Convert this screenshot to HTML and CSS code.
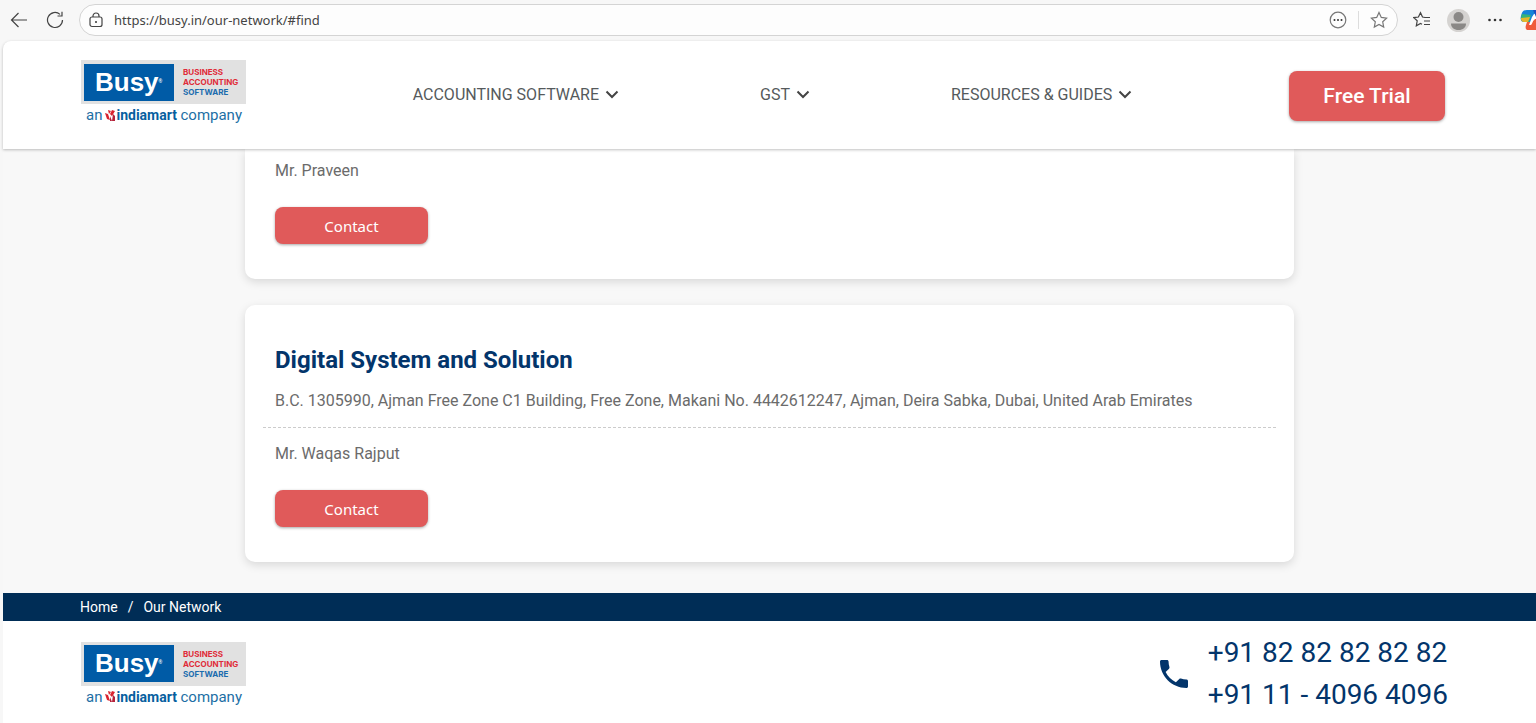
FILE: index.html
```html
<!DOCTYPE html>
<html lang="en">
<head>
    <meta charset="UTF-8">
    <meta name="viewport" content="width=device-width, initial-scale=1.0">
    <title>Our Network</title>
    <link rel="stylesheet" href="styles.css">
</head>
<body>
    <div class="toolbar">
        <button class="iconBtn" aria-label="Back">
            <svg width="18" height="18" viewBox="0 0 18 18"><path d="M17 9H1.5M8.5 2 1.5 9l7 7"/></svg>
        </button>
        <button class="iconBtn" aria-label="Refresh">
            <svg width="18" height="18" viewBox="0 0 18 18"><path d="M16.5 9A7.5 7.5 0 1 1 14 3.4M16 .8V5h-4.500"/></svg>
        </button>
        <div class="address">
            <svg width="14" height="16" viewBox="0 0 14 16"><rect x="1" y="5" width="12" height="9.500" rx="2"/><path d="M4 5V4a3 3 0 0 1 6 0v1"/><circle class="dot" cx="7" cy="10" r="1"/></svg>
            <input type="text" class="url" aria-label="Address" value="https://busy.in/our-network/#find">
            <button class="iconBtn soft" aria-label="Page options">
                <svg width="18" height="18" viewBox="0 0 18 18"><circle cx="9" cy="9" r="7.800"/><circle class="dot" cx="5.500" cy="9" r="1"/><circle class="dot" cx="9" cy="9" r="1"/><circle class="dot" cx="12.500" cy="9" r="1"/></svg>
            </button>
            <span class="divider"></span>
            <button class="iconBtn soft" aria-label="Add to favorites">
                <svg width="18" height="18" viewBox="0 0 18 18"><path d="M9 1.500l2.300 4.900 5.300.7-3.900 3.700 1 5.300L9 13.500l-4.700 2.600 1-5.300L1.400 7.100l5.300-.7z"/></svg>
            </button>
        </div>
        <div class="tools">
            <button class="iconBtn" aria-label="Favorites">
                <svg width="18" height="18" viewBox="0 0 18 18"><path d="M17 6.500h-5L9.500 6 7.500 1.700 5.400 6l-4.600.6 3.400 3.200-.9 5 4.200-2.300 1.500.8M11 10h6M11 13.500h6"/></svg>
            </button>
            <button class="iconBtn" aria-label="Profile">
                <svg class="avatar" width="23" height="23" viewBox="0 0 23 23"><circle cx="11.500" cy="11.500" r="11.500" fill="#d5d3d1"/><circle cx="11.500" cy="8" r="5" fill="#8a8886"/><path d="M4 14.500h15c0 4-3 6.500-7.500 6.500S4 18.500 4 14.500z" fill="#8a8886"/></svg>
            </button>
            <button class="iconBtn" aria-label="Settings">
                <svg width="18" height="18" viewBox="0 0 18 18"><circle class="dot" cx="3.500" cy="9" r="1.300"/><circle class="dot" cx="9" cy="9" r="1.300"/><circle class="dot" cx="14.500" cy="9" r="1.300"/></svg>
            </button>
            <button class="iconBtn" aria-label="Copilot">
                <svg class="copilot" width="24" height="22" viewBox="0 0 24 22">
                    <path d="M7 1h9l-4 12H5c-4 0-5-2-4-6 1-4 2-6 6-6z" fill="#1683d8"/>
                    <path d="M2 5l9 1-2 7H5c-4 0-5-3-3-8z" fill="#35b37a"/>
                    <path d="M1 9l9-1-2 5H5c-3 0-4-1-4-4z" fill="#e5b62c"/>
                    <path d="M17 8h3c4 0 4 3 3 7-1 4-2 6-6 6H8c-2 0-3-2-2-5l1-3h5z" fill="#ef5a3c"/>
                    <path d="M14 5h3l2 5h-4c-2 0-2 4-4 6H9l3-8z" fill="#fff"/>
                    <path d="M13 1h3c2 0 3 4 4 7h-4z" fill="#1d4fc0"/>
                </svg>
            </button>
        </div>
    </div>

    <div class="page">
        <header>
            <a href="#" class="logo">
                <span class="logoBox">
                    <span class="logoName">Busy<sup>®</sup></span>
                    <span class="logoText">BUSINESS<br>ACCOUNTING<br><span class="blue">SOFTWARE</span></span>
                </span>
                <span class="tagline">an
                    <svg width="11" height="11" viewBox="0 0 11 11"><path d="M0 3l3 1 2 6-3-1zM3 0l3 1-2 3zM7 0l3 1-3 5-2-2z" fill="#d8232f"/><path d="M8 4l2 2v5H7zM5 6l2 5H5z" fill="#b5223a"/></svg><b>indiamart</b>
                    <span>company</span>
                </span>
            </a>
            <nav>
                <a href="#">ACCOUNTING SOFTWARE <svg width="14" height="9" viewBox="0 0 14 9"><path d="M1.500 1.500 7 7l5.500-5.500"/></svg></a>
                <a href="#">GST <svg width="14" height="9" viewBox="0 0 14 9"><path d="M1.500 1.500 7 7l5.500-5.500"/></svg></a>
                <a href="#">RESOURCES &amp; GUIDES <svg width="14" height="9" viewBox="0 0 14 9"><path d="M1.500 1.500 7 7l5.500-5.500"/></svg></a>
            </nav>
            <button class="trial">Free Trial</button>
        </header>

        <main>
            <div class="card first">
                <p class="person">Mr. Praveen</p>
                <button class="contact">Contact</button>
            </div>
            <div class="card">
                <h2>Digital System and Solution</h2>
                <p class="location">B.C. 1305990, Ajman Free Zone C1 Building, Free Zone, Makani No. 4442612247, Ajman, Deira Sabka, Dubai, United Arab Emirates</p>
                <p class="person">Mr. Waqas Rajput</p>
                <button class="contact">Contact</button>
            </div>
        </main>

        <div class="breadcrumb">
            <a href="#">Home</a>
            <span>/</span>
            <a href="#">Our Network</a>
        </div>

        <footer>
            <a href="#" class="logo">
                <span class="logoBox">
                    <span class="logoName">Busy<sup>®</sup></span>
                    <span class="logoText">BUSINESS<br>ACCOUNTING<br><span class="blue">SOFTWARE</span></span>
                </span>
                <span class="tagline">an
                    <svg width="11" height="11" viewBox="0 0 11 11"><path d="M0 3l3 1 2 6-3-1zM3 0l3 1-2 3zM7 0l3 1-3 5-2-2z" fill="#d8232f"/><path d="M8 4l2 2v5H7zM5 6l2 5H5z" fill="#b5223a"/></svg><b>indiamart</b>
                    <span>company</span>
                </span>
            </a>
            <div class="phone">
                <svg width="28" height="28" viewBox="3 3 18 18"><path d="M6.620 10.790c1.440 2.830 3.760 5.140 6.590 6.590l2.200-2.200c.270-.270.670-.360 1.020-.240 1.120.370 2.330.570 3.570.570.550 0 1 .450 1 1V20c0 .550-.450 1-1 1-9.390 0-17-7.610-17-17 0-.550.450-1 1-1h3.500c.550 0 1 .450 1 1 0 1.250.200 2.450.570 3.570.110.350.030.740-.250 1.020z"/></svg>
                <div class="numbers">
                    <a href="tel:+918282828282">+91 82 82 82 82 82</a>
                    <a href="tel:+911140964096">+91 11 - 4096 4096</a>
                </div>
            </div>
        </footer>
    </div>
</body>
</html>
```
FILE: styles.css
```css
* {
    margin: 0;
    padding: 0;
    box-sizing: border-box;
}
body {
    min-height: 100vh;
    background-color: #f7f7f7;
    font-family: Roboto, "Liberation Sans", sans-serif;
    color: #6b6b6b;
    overflow-x: hidden;
    display: flex;
    flex-direction: column;
}
a {
    color: inherit;
    text-decoration: none;
}
button {
    border: 0;
    cursor: pointer;
}

/* browser bar */
.toolbar {
    display: flex;
    align-items: center;
    height: 40px;
    padding-left: 10px;
    gap: 18px;
    overflow: hidden;
}
.toolbar svg {
    fill: none;
    stroke: #444;
    stroke-width: 1.2;
    flex-shrink: 0;
}
.toolbar .dot {
    fill: #333;
    stroke: none;
}
.toolbar .avatar, .toolbar .copilot {
    stroke: none;
}
.iconBtn {
    display: flex;
    flex-shrink: 0;
    background: none;
}
.toolbar .soft svg {
    stroke: #777;
}
.address {
    flex: 1;
    display: flex;
    align-items: center;
    gap: 11px;
    height: 32px;
    margin: 0 -3px;
    padding: 0 9px;
    background-color: #fdfdfd;
    border: 1px solid #d4d4d4;
    border-radius: 16px;
}
.url {
    flex: 1;
    border: 0;
    outline: 0;
    background: none;
    color: #444;
    font-family: "Noto Sans", "Open Sans", sans-serif;
    font-size: 13px;
}
.divider {
    width: 1px;
    height: 18px;
    background-color: #ddd;
}
.tools {
    display: flex;
    align-items: center;
    gap: 16px;
    margin-right: -8px;
}

.page {
    flex: 1;
    display: flex;
    flex-direction: column;
    margin: 1px 0 0 3px;
    background-color: #f8f8f8;
    border-top-left-radius: 8px;
}
header {
    display: flex;
    align-items: center;
    justify-content: space-between;
    height: 108px;
    padding: 2px 91px 0 78px;
    background-color: #fff;
    border-top-left-radius: 8px;
    box-shadow: 0 1px 3px rgba(0, 0, 0, 0.25);
    z-index: 1;
}
header .logo {
    padding-bottom: 8px;
}

/* logo */
.logo {
    display: flex;
    flex-direction: column;
    gap: 2px;
    width: 165px;
}
.logoBox {
    display: flex;
    align-items: center;
    gap: 9px;
    height: 44px;
    padding: 3px;
    background-color: #e1e1e1;
}
.logoName {
    width: 90px;
    height: 37px;
    padding-left: 11px;
    background-color: #005ba6;
    color: #fff;
    font: bold 26px/37px "Liberation Sans", Arial, sans-serif;
}
.logoName sup {
    font-size: 5px;
    line-height: 5px;
    vertical-align: 8px;
}
.logoText {
    color: #e02b38;
    font: bold 8px/10px Inter, sans-serif;
}
.blue {
    color: #1a6cae;
}
.tagline {
    display: flex;
    align-items: center;
    padding: 0 4px 0 5px;
    color: #1d6fa5;
    font-size: 15px;
    line-height: 18px;
}
.tagline svg {
    margin-left: 3px;
}
.tagline b {
    color: #075f9f;
    font-size: 14px;
}
.tagline span {
    margin-left: auto;
}

nav {
    display: flex;
    gap: 141px;
    padding: 0 0 4px 10px;
    color: #555a5c;
    font-size: 16px;
}
nav a {
    display: flex;
    align-items: center;
    gap: 6px;
}
nav svg {
    fill: none;
    stroke: #444;
    stroke-width: 2;
}
.trial, .contact {
    background-color: #e05a5a;
    color: #fff;
    border-radius: 8px;
    box-shadow: 0 1px 3px rgba(0, 0, 0, 0.35);
}
.trial {
    width: 156px;
    height: 50px;
    font: 500 21px Roboto, sans-serif;
}

/* dealer cards */
main {
    padding: 0 30px 31px;
}
.card {
    max-width: 1049px;
    margin: 0 auto;
    padding: 41px 30px 35px;
    background-color: #fff;
    border-radius: 10px;
    box-shadow: 0 3px 10px rgba(0, 0, 0, 0.13);
}
.card.first {
    margin-bottom: 26px;
    padding-top: 10px;
    border-radius: 0 0 10px 10px;
}
.card h2 {
    color: #03356b;
    font-size: 24px;
    line-height: 28px;
    font-weight: 700;
}
.location, .person {
    font-size: 16px;
    line-height: 24px;
}
.location {
    margin: 15px -12px 14px;
    padding: 0 12px 14px;
    border-bottom: 1px dashed #ccc;
}
.contact {
    display: block;
    width: 153px;
    height: 37px;
    margin-top: 24px;
    font: 15px "Noto Sans", "Open Sans", sans-serif;
}

.breadcrumb {
    display: flex;
    gap: 10px;
    padding: 0 77px;
    background-color: #002d56;
    color: #fff;
    font-size: 14px;
    line-height: 28px;
}
footer {
    flex: 1;
    display: flex;
    justify-content: space-between;
    align-items: center;
    padding: 3px 88px 0 78px;
    background-color: #fff;
}
.phone {
    display: flex;
    align-items: center;
    gap: 20px;
    color: #03356b;
}
.phone svg {
    fill: #03356b;
}
.numbers {
    display: flex;
    flex-direction: column;
    font-size: 28px;
    line-height: 42px;
}
```
